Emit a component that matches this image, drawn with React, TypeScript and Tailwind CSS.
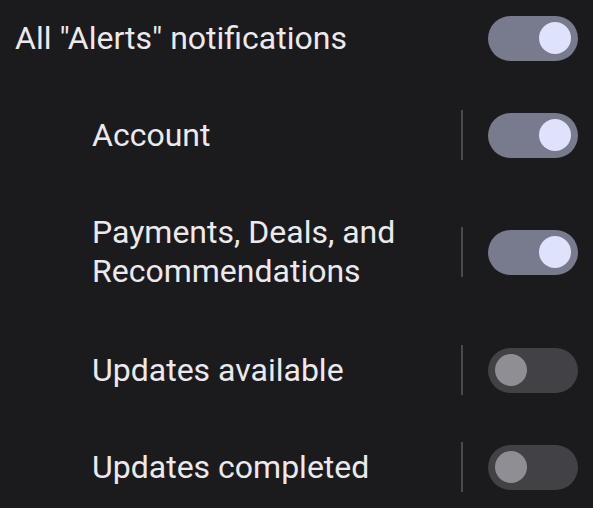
import { useState } from 'react'

type Item = { id: string; label: string[]; on: boolean; h: string }

const initial: Item[] = [
    { id: 'account', label: ['Account'], on: true, h: 'h-[118px]' },
    { id: 'payments', label: ['Payments, Deals, and', 'Recommendations'], on: true, h: 'h-[116px]' },
    { id: 'avail', label: ['Updates available'], on: false, h: 'h-[120px]' },
    { id: 'done', label: ['Updates completed'], on: false, h: 'h-[74px]' },
]

function Toggle({ on, onClick }: { on: boolean; onClick: () => void }) {
    return (
        <button
            onClick={onClick}
            className={`flex items-center w-[90px] h-[45px] rounded-full px-[7px] shrink-0 ${on ? 'bg-[#777b8d] justify-end' : 'bg-[#424146] justify-start'}`}
        >
            <span className={`block w-[32px] h-[32px] rounded-full ${on ? 'bg-[#dfe2fb]' : 'bg-[#8f8e94]'}`} />
        </button>
    )
}

export default function App() {
    const [all, setAll] = useState(true)
    const [items, setItems] = useState(initial)

    const toggle = (id: string) => {
        setItems(prev => prev.map(it => (it.id === id ? { ...it, on: !it.on } : it)))
    }

    return (
        <div className="w-[593px] h-[508px] bg-[#1b1b1d] text-[#ece9ee] overflow-hidden font-['Roboto',sans-serif] text-[32px] leading-[39px]">
            <div className="flex items-center justify-between h-[76px] pl-[15px] pr-[15px]">
                <span>All "Alerts" notifications</span>
                <Toggle on={all} onClick={() => setAll(!all)} />
            </div>

            {items.map(it => (
                <div key={it.id} className={`flex items-center ${it.h} pl-[92px] pr-[15px]`}>
                    <div className="flex-1">
                        {it.label.map(l => (
                            <div key={l}>{l}</div>
                        ))}
                    </div>
                    <div className="w-[2px] h-[50px] bg-[#4a4a4e] mr-[25px]" />
                    <Toggle on={it.on} onClick={() => toggle(it.id)} />
                </div>
            ))}
        </div>
    )
}
